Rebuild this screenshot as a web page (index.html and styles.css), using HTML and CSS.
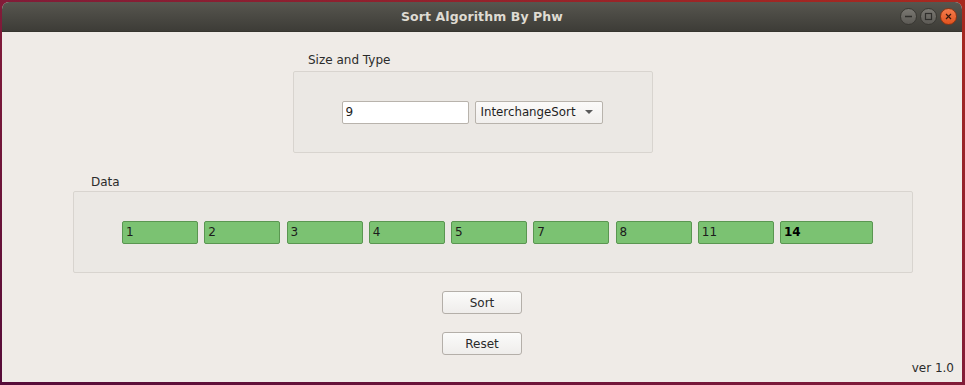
FILE: index.html
```html
<!DOCTYPE html>
<html lang="en">

<head>
    <meta charset="UTF-8">
    <meta name="viewport" content="width=device-width, initial-scale=1.0">
    <title>Sort Algorithm By Phw</title>
    <link rel="stylesheet" href="styles.css">
</head>

<body>
    <div class="window">
        <div class="titleBar">
            <div class="title">Sort Algorithm By Phw</div>
            <div class="winButtons">
                <div class="winBtn">
                    <svg width="9" height="9" viewBox="0 0 9 9"><line x1="1" y1="4.5" x2="8" y2="4.5" stroke="#2f2e2b" stroke-width="1.4"/></svg>
                </div>
                <div class="winBtn">
                    <svg width="9" height="9" viewBox="0 0 9 9"><rect x="1.5" y="1.5" width="6" height="6" fill="none" stroke="#2f2e2b" stroke-width="1.2"/></svg>
                </div>
                <div class="winBtn close">
                    <svg width="9" height="9" viewBox="0 0 9 9"><path d="M2 2 L7 7 M7 2 L2 7" stroke="#3a1a0e" stroke-width="1.2"/></svg>
                </div>
            </div>
        </div>
        <div class="content">
            <div class="group sizeGroup">
                <div class="groupLabel">Size and Type</div>
                <div class="groupBox sizeBox">
                    <input class="sizeInput" type="text" value="9">
                    <div class="combo">
                        <span>InterchangeSort</span>
                        <span class="arrow"></span>
                    </div>
                </div>
            </div>
            <div class="group dataGroup">
                <div class="groupLabel">Data</div>
                <div class="groupBox dataBox">
                    <div class="cell">1</div>
                    <div class="cell">2</div>
                    <div class="cell">3</div>
                    <div class="cell">4</div>
                    <div class="cell">5</div>
                    <div class="cell">7</div>
                    <div class="cell">8</div>
                    <div class="cell">11</div>
                    <div class="cell last">14</div>
                </div>
            </div>
            <div class="actions">
                <button class="btn">Sort</button>
                <button class="btn">Reset</button>
            </div>
            <div class="version">ver 1.0</div>
        </div>
    </div>
</body>

</html>
```

FILE: styles.css
```css
* {
    box-sizing: border-box;
    margin: 0;
    padding: 0;
}

body {
    width: 965px;
    height: 385px;
    overflow: hidden;
    background: linear-gradient(to top right, #560c39, #7e1a3a 45%, #a8291f);
    font-family: "DejaVu Sans", Verdana, sans-serif;
    font-size: 12px;
    color: #2d2d2d;
}

.window {
    margin: 2px 0 0 2px;
    width: 960px;
    height: 380px;
    background-color: #efebe7;
    border-radius: 7px 7px 0 0;
    overflow: hidden;
}

.titleBar {
    height: 30px;
    display: flex;
    align-items: center;
    justify-content: center;
    position: relative;
    background: linear-gradient(to bottom, #57564f, #3d3c37);
    border-bottom: 1px solid #36352f;
}

.title {
    font-weight: bold;
    font-size: 12.5px;
    color: #dfdbd2;
    letter-spacing: 0.1px;
}

.winButtons {
    position: absolute;
    right: 5px;
    top: 6px;
    display: flex;
    gap: 3px;
}

.winBtn {
    width: 17px;
    height: 17px;
    border-radius: 50%;
    background: linear-gradient(to bottom, #7a7872, #5c5a55);
    border: 1px solid #393833;
    display: flex;
    align-items: center;
    justify-content: center;
}

.winBtn.close {
    background: linear-gradient(to bottom, #f47c4c, #e2531f);
    border-color: #8e3514;
}

.content {
    height: 350px;
    display: flex;
    flex-direction: column;
}

.groupLabel {
    height: 16px;
    line-height: 16px;
    color: #2b2b2b;
}

.groupBox {
    height: 82px;
    border: 1px solid #d8d4cf;
    border-radius: 2px;
    background-color: #ebe8e4;
    display: flex;
    align-items: center;
}

.sizeGroup {
    margin: 20px 0 0 291px;
    width: 360px;
}

.sizeGroup .groupLabel {
    padding-left: 15px;
    margin-bottom: 3px;
}

.sizeBox {
    justify-content: center;
    gap: 6px;
    padding-right: 2px;
}

.sizeInput {
    width: 127px;
    height: 23px;
    border: 1px solid #b8b3ac;
    border-radius: 2px;
    background: #fff;
    font-family: "DejaVu Sans", Verdana, sans-serif;
    font-size: 12px;
    color: #1e1e1e;
    padding-left: 3px;
    outline: none;
}

.combo {
    width: 128px;
    height: 23px;
    border: 1px solid #b8b3ac;
    border-radius: 2px;
    background: linear-gradient(to bottom, #fbfaf9, #f1efed);
    display: flex;
    align-items: center;
    justify-content: space-between;
    padding: 0 9px 0 5px;
    color: #1e1e1e;
    font-size: 11.8px;
}

.arrow {
    width: 0;
    height: 0;
    border-left: 4px solid transparent;
    border-right: 4px solid transparent;
    border-top: 4px solid #5a5a5a;
}

.dataGroup {
    margin: 21px 0 0 71px;
    width: 840px;
}

.dataGroup .groupLabel {
    padding-left: 18px;
    margin-bottom: 1px;
}

.dataBox {
    padding-left: 48px;
    gap: 6.25px;
}

.cell {
    width: 76px;
    height: 23px;
    line-height: 21px;
    padding-left: 3px;
    background-color: #7bc272;
    border: 1px solid #5a9651;
    border-radius: 2px;
    color: #1c1c1c;
}

.cell.last {
    width: 93px;
    font-weight: bold;
    color: #000;
}

.actions {
    margin: 18px 0 0 440px;
    display: flex;
    flex-direction: column;
    gap: 18px;
}

.btn {
    width: 80px;
    height: 23px;
    border: 1px solid #b4afa9;
    border-radius: 3px;
    background: linear-gradient(to bottom, #fbfbfa, #efedeb);
    font-family: "DejaVu Sans", Verdana, sans-serif;
    font-size: 12px;
    color: #2a2a2a;
}

.version {
    margin-top: 5px;
    align-self: flex-end;
    padding-right: 8px;
    line-height: 16px;
    color: #2a2a2a;
}
```
